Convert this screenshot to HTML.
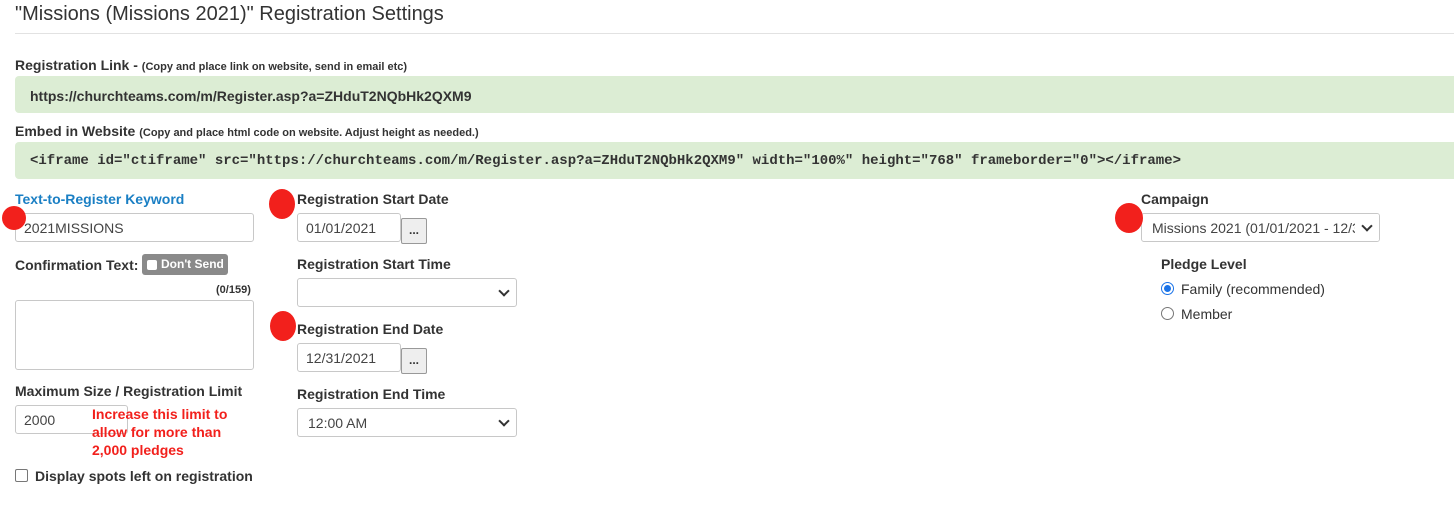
<!DOCTYPE html>
<html><head><style>
body{margin:0;width:1454px;height:529px;background:#fff;font-family:"Liberation Sans",Arial,sans-serif;color:#333;position:relative;overflow:hidden}
.a{position:absolute}
h1{position:absolute;left:15px;top:3px;margin:0;font-weight:normal;font-size:20px;color:#333}
.hr{position:absolute;left:15px;top:33px;width:1439px;height:1px;background:#e2e2e2}
.lbl{font-weight:bold;font-size:14px;color:#333}
.sm{font-size:11px;font-weight:bold}
.green{position:absolute;left:15px;width:1450px;background:#dcedd4;border-radius:4px;height:37px}
.inp{position:absolute;border:1px solid #c8c8c8;border-radius:3px;background:#fff;font-size:14px;color:#444;box-sizing:border-box;padding-left:8px;line-height:29px;height:29px}
.btn{position:absolute;width:26px;height:26px;border:1px solid #999;background:#eee;border-radius:2px;box-sizing:border-box;font-size:12px;text-align:center;line-height:22px;font-weight:bold}
.dot{position:absolute;width:26px;height:30px;border-radius:50%;background:#f2201c}
.chev{position:absolute;right:8px;top:8px;width:6px;height:6px;border-right:2px solid #333;border-bottom:2px solid #333;transform:rotate(45deg)}
.red{color:#f2201c;font-weight:bold;font-size:14px;line-height:18px}
.rad{position:absolute;width:11px;height:11px;border-radius:50%;border:1px solid #777}
</style></head><body>
<h1>"Missions (Missions 2021)" Registration Settings</h1>
<div class="hr"></div>
<div class="a lbl" style="left:15px;top:57px">Registration Link - <span class="sm">(Copy and place link on website, send in email etc)</span></div>
<div class="green" style="top:76px"></div>
<div class="a" style="left:30px;top:88px;font-weight:bold;font-size:14px">https://churchteams.com/m/Register.asp?a=ZHduT2NQbHk2QXM9</div>
<div class="a lbl" style="left:15px;top:123px">Embed in Website <span class="sm">(Copy and place html code on website. Adjust height as needed.)</span></div>
<div class="green" style="top:142px"></div>
<div class="a" style="left:30px;top:153px;font-family:'Liberation Mono',monospace;font-weight:bold;font-size:14px;white-space:pre">&lt;iframe id="ctiframe" src="https://churchteams.com/m/Register.asp?a=ZHduT2NQbHk2QXM9" width="100%" height="768" frameborder="0"&gt;&lt;/iframe&gt;</div>

<div class="a lbl" style="left:15px;top:191px;color:#1a7fc4">Text-to-Register Keyword</div>
<div class="inp" style="left:15px;top:213px;width:239px">2021MISSIONS</div>
<div class="dot" style="left:2px;top:206px;width:24px;height:24px"></div>
<div class="a lbl" style="left:15px;top:257px">Confirmation Text:</div>
<div class="a" style="left:142px;top:254px;width:86px;height:21px;background:#8a8a8a;border-radius:3px;color:#fff;font-size:12px;font-weight:bold;line-height:21px"><span style="display:inline-block;width:10px;height:10px;background:#fff;border-radius:2px;margin:0 4px 0 5px;vertical-align:-2px"></span>Don't Send</div>
<div class="a" style="left:216px;top:284px;font-size:11px;font-weight:bold">(0/159)</div>
<div class="inp" style="left:15px;top:300px;width:239px;height:70px"></div>
<div class="a lbl" style="left:15px;top:383px">Maximum Size / Registration Limit</div>
<div class="inp" style="left:15px;top:405px;width:113px">2000</div>
<div class="a red" style="left:92px;top:405px">Increase this limit to<br>allow for more than<br>2,000 pledges</div>
<div class="a" style="left:15px;top:469px;width:11px;height:11px;border:1px solid #777;border-radius:2px"></div>
<div class="a lbl" style="left:35px;top:468px">Display spots left on registration</div>

<div class="a lbl" style="left:297px;top:191px">Registration Start Date</div>
<div class="dot" style="left:269px;top:189px"></div>
<div class="inp" style="left:297px;top:213px;width:104px">01/01/2021</div>
<div class="btn" style="left:401px;top:218px">...</div>
<div class="a lbl" style="left:297px;top:256px">Registration Start Time</div>
<div class="inp" style="left:297px;top:278px;width:220px"><div class="chev"></div></div>
<div class="a lbl" style="left:297px;top:321px">Registration End Date</div>
<div class="dot" style="left:270px;top:311px"></div>
<div class="inp" style="left:297px;top:343px;width:104px">12/31/2021</div>
<div class="btn" style="left:401px;top:348px">...</div>
<div class="a lbl" style="left:297px;top:386px">Registration End Time</div>
<div class="inp" style="left:297px;top:408px;width:220px;padding-left:10px">12:00 AM<div class="chev"></div></div>

<div class="a lbl" style="left:1141px;top:191px">Campaign</div>
<div class="inp" style="left:1141px;top:213px;width:239px;padding-left:10px;overflow:hidden;white-space:nowrap">Missions 2021 (01/01/2021 - 12/3<div style="position:absolute;right:0;top:0;width:24px;height:27px;background:#fff"></div><div class="chev"></div></div>
<div class="dot" style="left:1115px;top:203px;width:28px;height:30px"></div>
<div class="a lbl" style="left:1161px;top:256px">Pledge Level</div>
<div class="rad" style="left:1161px;top:282px;border:1px solid #1a73e8;background:#fff"><div style="position:absolute;left:2px;top:2px;width:7px;height:7px;border-radius:50%;background:#1a73e8"></div></div>
<div class="a" style="left:1181px;top:281px;font-size:14px">Family (recommended)</div>
<div class="rad" style="left:1161px;top:307px"></div>
<div class="a" style="left:1181px;top:306px;font-size:14px">Member</div>
</body></html>
